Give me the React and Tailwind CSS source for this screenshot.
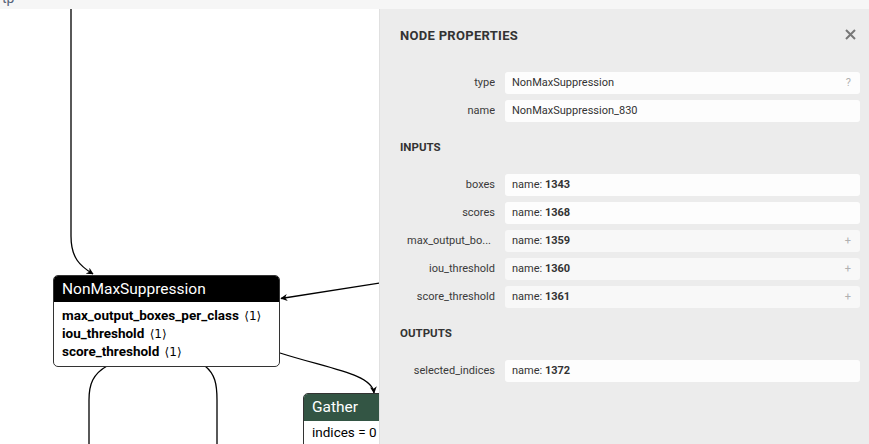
import React from "react";

const F = { fontFamily: "Roboto, 'DejaVu Sans', sans-serif" };
const DJ = { fontFamily: "'DejaVu Sans', sans-serif" };

function Row({ label, children, right, light }) {
  return (
    <div className="flex items-center h-[22px]">
      <div className="w-[95px] shrink-0 text-right text-[11px] text-[#3a3a3a] whitespace-nowrap overflow-hidden">{label}</div>
      <div className={`ml-[10px] flex-1 h-[22px] rounded-[3px] ${light ? "bg-[#f8f8f8]" : "bg-[#fdfdfd]"} pl-[7px] pr-[9px] flex items-center justify-between text-[11px] text-[#333]`}>
        <span>{children}</span>
        {right ? <span className="text-[#b0b0b0] text-[11px]">{right}</span> : null}
      </div>
    </div>
  );
}

function Name({ n }) {
  return (
    <>
      name: <b className="font-bold">{n}</b>
    </>
  );
}

function Br() {
  return (
    <span className="text-[12px] leading-[12px] ml-[2px]" style={DJ}>⟨1⟩</span>
  );
}

export default function App() {
  return (
    <div className="w-[869px] h-[444px] overflow-hidden flex flex-col bg-white" style={F}>
      <div className="h-[9px] bg-[#f6f6f6] overflow-hidden shrink-0">
        <div className="text-[14px] leading-[14px] text-[#56657a] -mt-[9px] ml-[2px]">tp</div>
      </div>
      <div className="flex flex-1 min-h-0">
        <div className="relative w-[379px] h-full bg-white overflow-hidden shrink-0">
          <svg className="absolute left-0 top-0" width="379" height="435" viewBox="0 9 379 435">
            <defs>
              <marker id="ah" viewBox="0 0 10 10" refX="9" refY="5" markerWidth="7" markerHeight="7" orient="auto" markerUnits="userSpaceOnUse">
                <path d="M0,0 L10,5 L0,10 L3,5 z" fill="#000" />
              </marker>
            </defs>
            <g fill="none" stroke="#000" strokeWidth="1.3">
              <path d="M71,9 L71,236 C71,258 80,266 93,274" markerEnd="url(#ah)" />
              <path d="M380,283 L281,298.5" markerEnd="url(#ah)" />
              <path d="M280,353 C330,369 372,374 374,393" markerEnd="url(#ah)" />
              <path d="M107,366 C93,374 89,384 89,400 L89,444" />
              <path d="M205,366 C215,374 217,384 217,400 L217,444" />
            </g>
          </svg>
          <div className="absolute left-[53px] top-[266px] w-[227px] h-[92px] rounded-[5px] border border-[#333] overflow-hidden bg-white">
            <div className="h-[26px] bg-black text-white text-[15.5px] leading-[26px] pl-[8px]">NonMaxSuppression</div>
            <div className="pl-[8px] pt-[4px] text-[13.5px] leading-[18px] text-black">
              <div className="h-[18px]"><b className="font-bold">max_output_boxes_per_class</b> <Br /></div>
              <div className="h-[18px]"><b className="font-bold">iou_threshold</b> <Br /></div>
              <div className="h-[18px]"><b className="font-bold">score_threshold</b> <Br /></div>
            </div>
          </div>
          <div className="absolute left-[303px] top-[384px] w-[120px] h-[70px] rounded-[5px] border border-[#333] overflow-hidden bg-white">
            <div className="h-[27px] bg-[#335544] text-white text-[15.5px] leading-[27px] pl-[8px]">Gather</div>
            <div className="pl-[8px] pt-[2px] text-[13.5px] leading-[18px] text-black">indices = 0</div>
          </div>
        </div>
        <div className="flex-1 bg-[#ececec] border-l border-[#e0e0e0] pl-[20px] pr-[9px] pt-[17px] flex flex-col">
          <div className="flex items-center justify-between h-[20px]">
            <div className="text-[13px] font-bold tracking-[0.3px] text-[#333]">NODE PROPERTIES</div>
            <svg width="11" height="11" viewBox="0 0 11 11" className="mr-[4px] -mt-[3px]">
              <path d="M1,1 L10,10 M10,1 L1,10" stroke="#777" strokeWidth="2" />
            </svg>
          </div>
          <div className="mt-[26px] flex flex-col gap-[6px]">
            <Row label="type" right="?">NonMaxSuppression</Row>
            <Row label="name">NonMaxSuppression_830</Row>
          </div>
          <div className="mt-[16px] h-[20px] flex items-center text-[11.5px] font-bold text-[#333]">INPUTS</div>
          <div className="mt-[16px] flex flex-col gap-[6px]">
            <Row label="boxes"><Name n="1343" /></Row>
            <Row label="scores"><Name n="1368" /></Row>
            <Row label={<span className="mr-[4px]">max_output_bo...</span>} right="+" light><Name n="1359" /></Row>
            <Row label="iou_threshold" right="+" light><Name n="1360" /></Row>
            <Row label="score_threshold" right="+" light><Name n="1361" /></Row>
          </div>
          <div className="mt-[16px] h-[20px] flex items-center text-[11.5px] font-bold text-[#333]">OUTPUTS</div>
          <div className="mt-[16px] flex flex-col gap-[6px]">
            <Row label="selected_indices"><Name n="1372" /></Row>
          </div>
        </div>
      </div>
    </div>
  );
}
